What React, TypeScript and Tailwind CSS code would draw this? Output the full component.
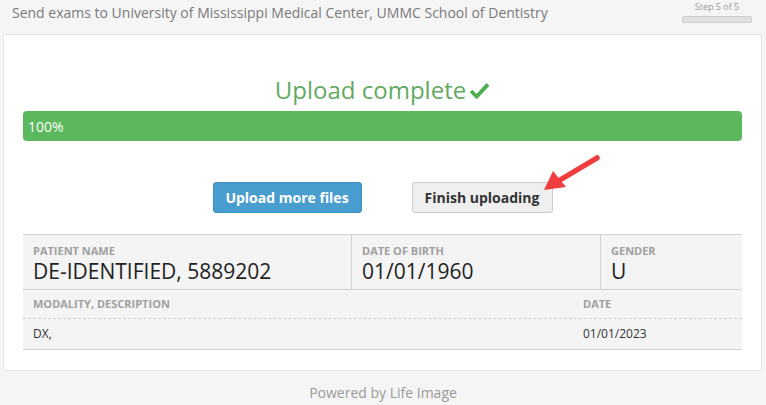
import React from 'react';

const font = { fontFamily: '"Open Sans", "Noto Sans", sans-serif' };

const CheckIcon = () => (
  <svg width="21" height="17" viewBox="0 0 22 18" className="ml-[3px] mb-[7px]">
    <path d="M2 9.5 L8 15.5 L20 2.5" fill="none" stroke="#4fae4f" strokeWidth="4" strokeLinejoin="miter" />
  </svg>
);

// red annotation arrow pointing at the finish button
const Arrow = () => (
  <svg width="70" height="50" viewBox="0 0 70 50" className="absolute left-[536px] top-[114px]">
    <line x1="57" y1="9" x2="20" y2="31" stroke="#ee3e3d" strokeWidth="5.5" strokeLinecap="round" />
    <polygon points="4,41 13,22 26,38" fill="#ee3e3d" />
  </svg>
);

const Label: React.FC<{ children: React.ReactNode }> = ({ children }) => (
  <div className="text-[11px] leading-[14px] font-bold uppercase text-[#a0a0a0]">{children}</div>
);

const App: React.FC = () => {
  return (
    <div className="w-[766px] h-[405px] bg-[#f5f5f5] text-[#333] overflow-hidden" style={font}>
      {/* Header */}
      <div className="h-[34px] flex items-start justify-between pl-[12px] pr-[14px]">
        <div className="pt-[3px] text-[14px] leading-[20px] text-[#7a7a7a]">
          Send exams to University of Mississippi Medical Center, UMMC School of Dentistry
        </div>
        <div className="flex flex-col items-center pt-[1px]">
          <div className="text-[9px] leading-[12px] text-[#999]">Step 5 of 5</div>
          <div className="mt-[3px] w-[70px] h-[7px] rounded-[2px] bg-[#e0e0e0] border border-[#cfcfcf]" />
        </div>
      </div>

      {/* Card */}
      <div className="relative ml-[3px] w-[759px] h-[337px] bg-white border border-[#e4e4e4] rounded-[3px] px-[19px]">
        <div className="pt-[39px] flex items-end justify-center text-[24px] leading-[32px] text-[#62aa62]">
          <span>Upload complete</span>
          <CheckIcon />
        </div>

        <div className="mt-[5px] h-[30px] rounded-[4px] bg-[#5cb85c] flex items-center pl-[5px] text-[14px] text-white">
          100%
        </div>

        <div className="mt-[41px] flex justify-center gap-[50px] text-[14px] font-bold">
          <button className="w-[149px] h-[31px] rounded-[3px] bg-[#4a9ecf] border border-[#3f8fbf] text-white">
            Upload more files
          </button>
          <button className="w-[141px] h-[31px] rounded-[3px] bg-[#efefef] border border-[#cccccc] text-[#333]">
            Finish uploading
          </button>
        </div>

        <Arrow />

        {/* Exam table */}
        <div className="mt-[21px] bg-[#f4f4f4] border-t border-b border-[#d2d2d2]">
          <div className="grid grid-cols-[329px_249px_1fr] h-[55px] border-b border-[#d2d2d2]">
            <div className="pl-[10px] pt-[9px] border-r border-[#d2d2d2]">
              <Label>Patient name</Label>
              <div className="text-[21px] leading-[26px] text-[#222]">DE-IDENTIFIED, 5889202</div>
            </div>
            <div className="pl-[10px] pt-[9px] border-r border-[#d2d2d2]">
              <Label>Date of birth</Label>
              <div className="text-[21px] leading-[26px] text-[#222]">01/01/1960</div>
            </div>
            <div className="pl-[10px] pt-[9px]">
              <Label>Gender</Label>
              <div className="text-[21px] leading-[26px] text-[#222]">U</div>
            </div>
          </div>
          <div className="flex h-[29px] items-center border-b border-dashed border-[#cfcfcf]">
            <div className="pl-[10px] flex-1">
              <Label>Modality, description</Label>
            </div>
            <div className="w-[159px]">
              <Label>Date</Label>
            </div>
          </div>
          <div className="flex h-[30px] items-center text-[12px] text-[#333]">
            <div className="pl-[10px] flex-1">DX,</div>
            <div className="w-[159px]">01/01/2023</div>
          </div>
        </div>
      </div>

      {/* Footer */}
      <div className="pt-[12px] text-center text-[14px] leading-[20px] text-[#9a9a9a]">
        Powered by Life Image
      </div>
    </div>
  );
};

export default App;
